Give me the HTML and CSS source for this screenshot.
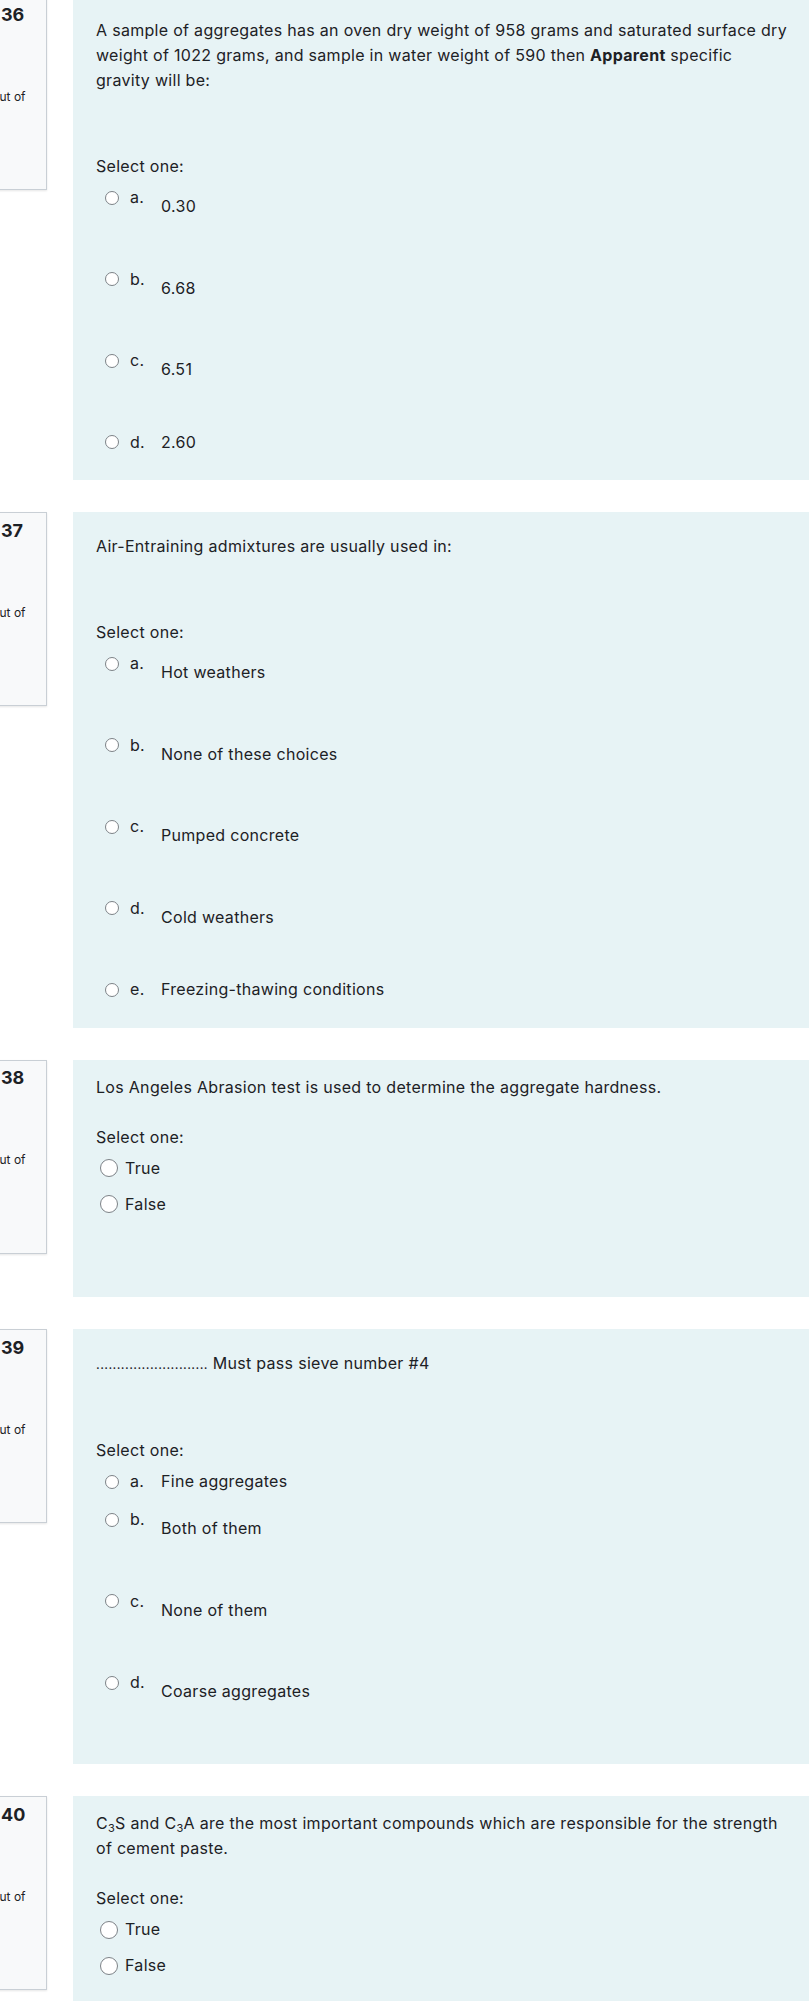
FILE: index.html
```html
<!DOCTYPE html>
<html lang="en">
<head>
<meta charset="utf-8">
<title>Quiz</title>
<link rel="stylesheet" href="styles.css">
</head>
<body>
<main class="quiz">

  <section class="que">
    <div class="info">
      <h3 class="qhead">Question <span class="qno">36</span></h3>
      <div class="grade">Marked out of 1.00</div>
    </div>
    <div class="content mc">
      <div class="qtext">A sample of aggregates has an oven dry weight of 958 grams and saturated surface dry<br>weight of 1022 grams, and sample in water weight of 590 then <strong>Apparent</strong> specific<br>gravity will be:</div>
      <div class="prompt">Select one:</div>
      <div class="answers">
        <label class="opt"><input type="radio" name="q36"><span class="num">a.</span><span class="ans shifted">0.30</span></label>
        <label class="opt"><input type="radio" name="q36"><span class="num">b.</span><span class="ans shifted">6.68</span></label>
        <label class="opt"><input type="radio" name="q36"><span class="num">c.</span><span class="ans shifted">6.51</span></label>
        <label class="opt"><input type="radio" name="q36"><span class="num">d.</span><span class="ans">2.60</span></label>
      </div>
    </div>
  </section>

  <section class="que">
    <div class="info">
      <h3 class="qhead">Question <span class="qno">37</span></h3>
      <div class="grade">Marked out of 1.00</div>
    </div>
    <div class="content mc">
      <div class="qtext">Air-Entraining admixtures are usually used in:</div>
      <div class="prompt">Select one:</div>
      <div class="answers">
        <label class="opt"><input type="radio" name="q37"><span class="num">a.</span><span class="ans shifted">Hot weathers</span></label>
        <label class="opt"><input type="radio" name="q37"><span class="num">b.</span><span class="ans shifted">None of these choices</span></label>
        <label class="opt"><input type="radio" name="q37"><span class="num">c.</span><span class="ans shifted">Pumped concrete</span></label>
        <label class="opt"><input type="radio" name="q37"><span class="num">d.</span><span class="ans shifted">Cold weathers</span></label>
        <label class="opt"><input type="radio" name="q37"><span class="num">e.</span><span class="ans">Freezing-thawing conditions</span></label>
      </div>
    </div>
  </section>

  <section class="que">
    <div class="info">
      <h3 class="qhead">Question <span class="qno">38</span></h3>
      <div class="grade">Marked out of 1.00</div>
    </div>
    <div class="content tf">
      <div class="qtext">Los Angeles Abrasion test is used to determine the aggregate hardness.</div>
      <div class="prompt">Select one:</div>
      <div class="answers">
        <label class="opt"><input type="radio" name="q38"><span class="ans">True</span></label>
        <label class="opt"><input type="radio" name="q38"><span class="ans">False</span></label>
      </div>
    </div>
  </section>

  <section class="que">
    <div class="info">
      <h3 class="qhead">Question <span class="qno">39</span></h3>
      <div class="grade">Marked out of 1.00</div>
    </div>
    <div class="content mc">
      <div class="qtext"><span class="dots">...........................</span> Must pass sieve number #4</div>
      <div class="prompt">Select one:</div>
      <div class="answers">
        <label class="opt"><input type="radio" name="q39"><span class="num">a.</span><span class="ans">Fine aggregates</span></label>
        <label class="opt"><input type="radio" name="q39"><span class="num">b.</span><span class="ans shifted">Both of them</span></label>
        <label class="opt"><input type="radio" name="q39"><span class="num">c.</span><span class="ans shifted">None of them</span></label>
        <label class="opt"><input type="radio" name="q39"><span class="num">d.</span><span class="ans shifted">Coarse aggregates</span></label>
      </div>
    </div>
  </section>

  <section class="que">
    <div class="info">
      <h3 class="qhead">Question <span class="qno">40</span></h3>
      <div class="grade">Marked out of 1.00</div>
    </div>
    <div class="content tf">
      <div class="qtext">C<sub>3</sub>S and C<sub>3</sub>A are the most important compounds which are responsible for the strength<br>of cement paste.</div>
      <div class="prompt">Select one:</div>
      <div class="answers">
        <label class="opt"><input type="radio" name="q40"><span class="ans">True</span></label>
        <label class="opt"><input type="radio" name="q40"><span class="ans">False</span></label>
      </div>
    </div>
  </section>

</main>
</body>
</html>
```

FILE: styles.css
```css
* {
  box-sizing: border-box;
}

html,
body {
  margin: 0;
  padding: 0;
  background: #ffffff;
}

body {
  font-family: Inter, "Noto Sans", "Liberation Sans", sans-serif;
  color: #1d2125;
  font-size: 16px;
  letter-spacing: 0.3px;
  line-height: 25px;
  overflow-x: hidden;
}

.quiz {
  display: flex;
  flex-direction: column;
  gap: 32px;
  margin-top: -4px;
}

.que {
  display: flex;
  align-items: flex-start;
}

/* left info box (scrolled partly out of view) */
.info {
  flex: none;
  width: 120px;
  height: 194px;
  margin-left: -73px;
  padding: 6.5px 0 0 20px;
  background: #f8f9fa;
  border: 1px solid #c9cfd5;
  box-shadow: 0 1px 2px rgba(0, 0, 0, 0.1);
  letter-spacing: 0;
}

.qhead {
  margin: 0 0 0 -31px;
  font-size: 18px;
  line-height: 22px;
  font-weight: 700;
  white-space: nowrap;
}

.grade {
  margin: 62px 0 0 -2px;
  font-size: 12px;
  line-height: 18px;
}

/* question body */
.content {
  flex: 1;
  margin-left: 26px;
  background: #e7f3f5;
  padding: 22px 4px 12.5px 23px;
}

.content.tf {
  padding-top: 15px;
  padding-bottom: 69.5px;
}

.qtext strong {
  font-weight: 700;
}

.qtext sub {
  font-size: 11px;
  line-height: 0;
  vertical-align: -3px;
}

.dots {
  font-size: 13px;
  letter-spacing: 0.4px;
}

.mc .prompt {
  margin-top: 61px;
}

.tf .prompt {
  margin-top: 25px;
}

.answers {
  margin-top: 6px;
  display: flex;
  flex-direction: column;
}

.opt {
  display: flex;
  align-items: flex-start;
  margin-bottom: 13px;
  padding-left: 9px;
}

.opt input {
  appearance: none;
  -webkit-appearance: none;
  flex: none;
  width: 14px;
  height: 14px;
  margin: 5.5px 11px 0 0;
  border: 1.5px solid #7d8287;
  border-radius: 50%;
  background: #ffffff;
}

.num {
  flex: none;
  width: 31px;
}

.ans.shifted {
  padding-top: 9px;
  padding-bottom: 34.5px;
}

.tf .opt {
  padding-left: 4px;
  margin-bottom: 11px;
}

.tf .opt input {
  width: 18px;
  height: 18px;
  margin: 3.5px 7px 0 0;
}
```
